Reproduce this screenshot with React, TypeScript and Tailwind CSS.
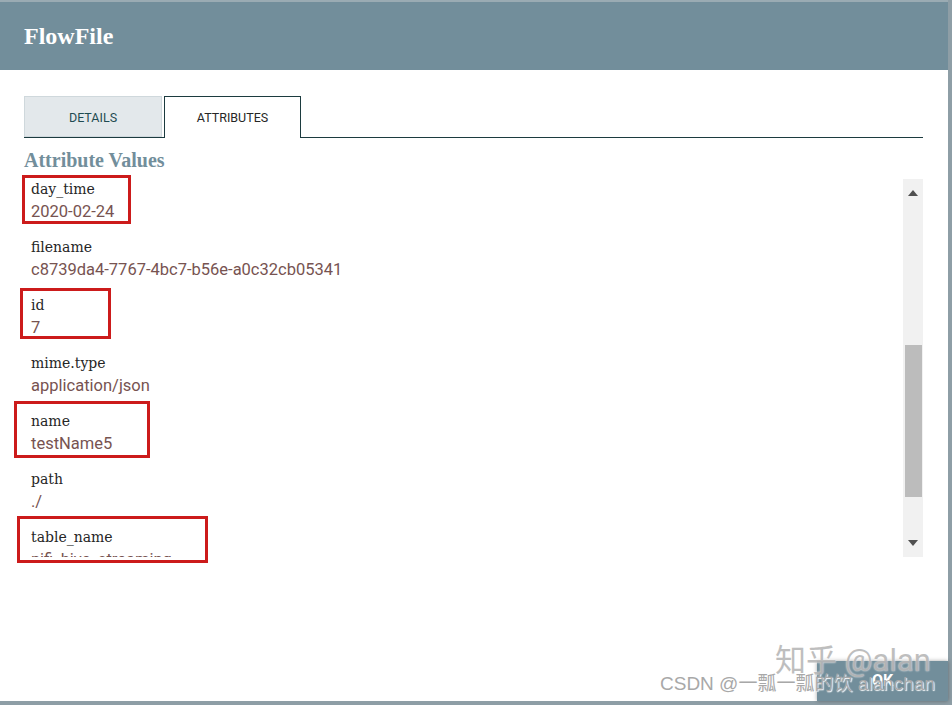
import React from 'react'

const ATTRIBUTES: { name: string; value: string }[] = [
  { name: 'day_time', value: '2020-02-24' },
  { name: 'filename', value: 'c8739da4-7767-4bc7-b56e-a0c32cb05341' },
  { name: 'id', value: '7' },
  { name: 'mime.type', value: 'application/json' },
  { name: 'name', value: 'testName5' },
  { name: 'path', value: './' },
  { name: 'table_name', value: 'nifi_hive_streaming' },
]

const slab = { fontFamily: '"Liberation Serif", serif' }
const nameFont = { fontFamily: '"DejaVu Serif", serif' }
const roboto = { fontFamily: 'Roboto, "Noto Sans CJK SC", sans-serif' }

// red annotation boxes drawn over the screenshot
const MARKS = [
  'left-[22px] top-[175px] w-[109px] h-[49px]',
  'left-[20px] top-[288px] w-[91px] h-[51px]',
  'left-[14px] top-[401px] w-[136px] h-[57px]',
  'left-[17px] top-[516px] w-[191px] h-[47px]',
]

function Scrollbar() {
  return (
    <div className="w-[20px] bg-[#f1f1f1] flex flex-col items-center shrink-0">
      <div className="h-[28px] flex items-center justify-center">
        <svg width="10" height="6" viewBox="0 0 10 6">
          <path d="M0 6 L5 0 L10 6 Z" fill="#505050" />
        </svg>
      </div>
      <div className="h-[138px]" />
      <div className="w-[17px] h-[152px] bg-[#bcbcbc]" />
      <div className="flex-1" />
      <div className="h-[28px] flex items-center justify-center">
        <svg width="10" height="6" viewBox="0 0 10 6">
          <path d="M0 0 L5 6 L10 0 Z" fill="#505050" />
        </svg>
      </div>
    </div>
  )
}

export default function App() {
  return (
    <div className="relative w-[952px] h-[705px] bg-[#8e9ea6] overflow-hidden">
      <div className="w-[948px] h-[701px] bg-white flex flex-col">
        <div className="h-[70px] bg-[#728e9b] border-t-2 border-[#9aabb3] px-6 flex items-center">
          <span className="text-white text-[24px] font-bold" style={slab}>
            FlowFile
          </span>
        </div>

        <div className="pl-6 pr-[25px] pt-[26px] flex flex-col">
          <div className="flex items-end gap-[2px] border-b border-[#1c3b3f]">
            <div
              className="w-[138px] h-[41px] pt-[3px] bg-[#e3e8eb] border border-[#cfd8dc] flex items-center justify-center text-[12.5px] text-[#1f4b52]"
              style={roboto}
            >
              DETAILS
            </div>
            <div
              className="w-[137px] h-[42px] pt-[2px] -mb-px bg-white border border-b-0 border-[#1c3b3f] flex items-center justify-center text-[12.5px] text-[#262626]"
              style={roboto}
            >
              ATTRIBUTES
            </div>
          </div>

          <div className="mt-[7px] h-[34px] text-[20px] font-bold text-[#728e9b] leading-[30px]" style={slab}>
            Attribute Values
          </div>

          <div className="flex h-[378px]">
            <div className="flex-1 overflow-hidden pl-[7px]">
              {ATTRIBUTES.map((a) => (
                <div key={a.name} className="h-[58px]">
                  <div className="h-[22px] leading-[21px] text-[14px] text-[#262626]" style={nameFont}>
                    {a.name}
                  </div>
                  <div className="h-[22px] leading-[22px] text-[16.5px] text-[#775351]" style={roboto}>
                    {a.value}
                  </div>
                </div>
              ))}
            </div>
            <Scrollbar />
          </div>
        </div>

        <div className="flex-1" />
        <div className="flex justify-end">
          <div
            className="w-[131px] h-[40px] bg-[#728e9b] flex items-center justify-center text-white text-[16px] font-bold shadow-[0_0_4px_rgba(0,0,0,0.35)]"
            style={roboto}
          >
            OK
          </div>
        </div>
      </div>

      {MARKS.map((m) => (
        <div key={m} className={`absolute border-[3px] border-[#cc1b1b] ${m}`} />
      ))}

      <div
        className="absolute left-[775px] top-[642px] text-[31px] leading-[38px] text-[#b8b8b8] opacity-90 [text-shadow:0_0_2px_#ffffff]"
        style={roboto}
      >
        知乎 @alan
      </div>
      <div
        className="absolute left-[660px] top-[672px] text-[19px] leading-[24px] text-[#a8a8a8] [text-shadow:1px_1px_1px_#ffffff]"
        style={{ fontFamily: '"Liberation Sans", "Noto Sans CJK SC", sans-serif' }}
      >
        CSDN @一瓢一瓢的饮 alanchan
      </div>
    </div>
  )
}
